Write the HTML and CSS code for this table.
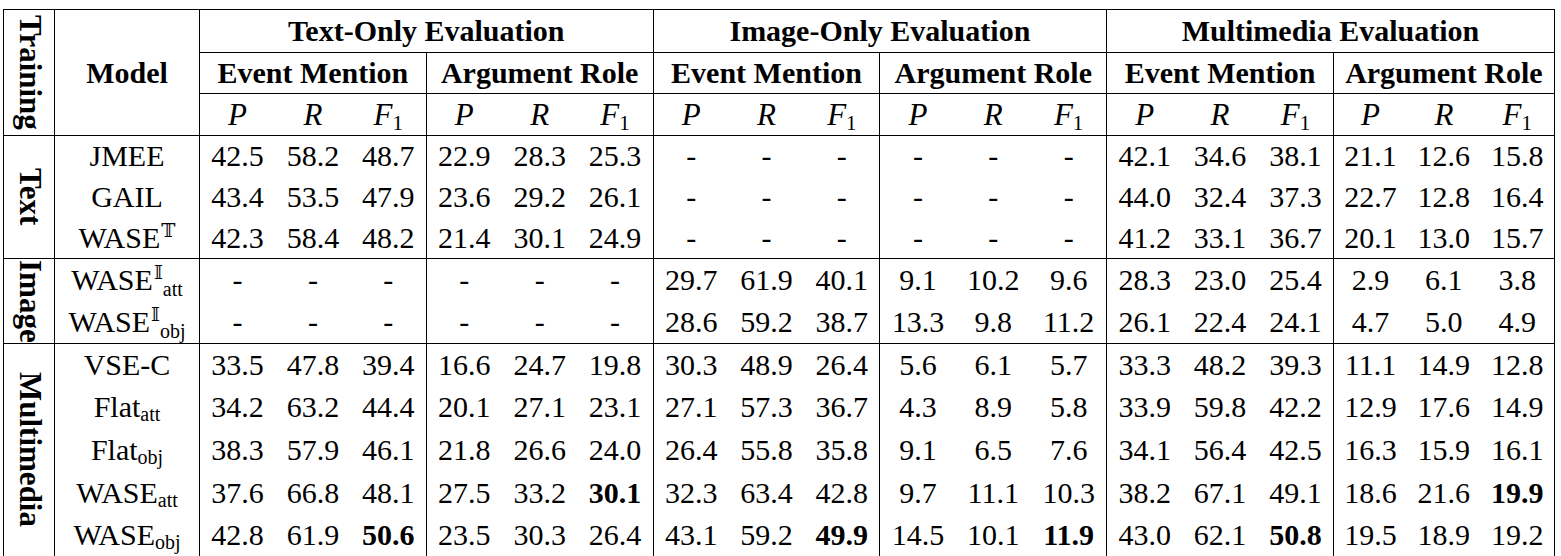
FILE: index.html
```html
<!DOCTYPE html>
<html lang="en">
<head>
    <meta charset="UTF-8">
    <meta name="viewport" content="width=device-width, initial-scale=1.0">
    <title>Event Extraction Results</title>
    <link rel="stylesheet" href="styles.css">
</head>
<body>
    <table class="results">
        <colgroup><col class="c-train"></colgroup>
        <colgroup><col class="c-model"></colgroup>
        <colgroup><col class="c-num"><col class="c-num"><col class="c-num"></colgroup>
        <colgroup><col class="c-num"><col class="c-num"><col class="c-num"></colgroup>
        <colgroup><col class="c-num"><col class="c-num"><col class="c-num"></colgroup>
        <colgroup><col class="c-num"><col class="c-num"><col class="c-num"></colgroup>
        <colgroup><col class="c-num"><col class="c-num"><col class="c-num"></colgroup>
        <colgroup><col class="c-last"><col class="c-last"><col class="c-last"></colgroup>

        <thead>
            <tr class="h1">
                <th rowspan="3" class="side"><span class="vert">Training</span></th>
                <th rowspan="3">Model</th>
                <th colspan="6" class="grp">Text-Only Evaluation</th>
                <th colspan="6" class="grp">Image-Only Evaluation</th>
                <th colspan="6" class="grp">Multimedia Evaluation</th>
            </tr>
            <tr class="h2">
                <th colspan="3" class="sub">Event Mention</th>
                <th colspan="3" class="sub">Argument Role</th>
                <th colspan="3" class="sub">Event Mention</th>
                <th colspan="3" class="sub">Argument Role</th>
                <th colspan="3" class="sub">Event Mention</th>
                <th colspan="3" class="sub">Argument Role</th>
            </tr>
            <tr class="h3">
                <th class="m">P</th><th class="m">R</th><th class="m">F<sub class="one">1</sub></th>
                <th class="m">P</th><th class="m">R</th><th class="m">F<sub class="one">1</sub></th>
                <th class="m">P</th><th class="m">R</th><th class="m">F<sub class="one">1</sub></th>
                <th class="m">P</th><th class="m">R</th><th class="m">F<sub class="one">1</sub></th>
                <th class="m">P</th><th class="m">R</th><th class="m">F<sub class="one">1</sub></th>
                <th class="m">P</th><th class="m">R</th><th class="m">F<sub class="one">1</sub></th>
            </tr>
        </thead>

        <!-- trained on text only -->
        <tbody class="text">
            <tr>
                <th rowspan="3" class="side"><span class="vert">Text</span></th>
                <td>JMEE</td>
                <td>42.5</td><td>58.2</td><td>48.7</td><td>22.9</td><td>28.3</td><td>25.3</td>
                <td>-</td><td>-</td><td>-</td><td>-</td><td>-</td><td>-</td>
                <td>42.1</td><td>34.6</td><td>38.1</td><td>21.1</td><td>12.6</td><td>15.8</td>
            </tr>
            <tr>
                <td>GAIL</td>
                <td>43.4</td><td>53.5</td><td>47.9</td><td>23.6</td><td>29.2</td><td>26.1</td>
                <td>-</td><td>-</td><td>-</td><td>-</td><td>-</td><td>-</td>
                <td>44.0</td><td>32.4</td><td>37.3</td><td>22.7</td><td>12.8</td><td>16.4</td>
            </tr>
            <tr>
                <td>WASE<sup class="ds">𝕋</sup></td>
                <td>42.3</td><td>58.4</td><td>48.2</td><td>21.4</td><td>30.1</td><td>24.9</td>
                <td>-</td><td>-</td><td>-</td><td>-</td><td>-</td><td>-</td>
                <td>41.2</td><td>33.1</td><td>36.7</td><td>20.1</td><td>13.0</td><td>15.7</td>
            </tr>
        </tbody>

        <!-- trained on images only -->
        <tbody class="image">
            <tr>
                <th rowspan="2" class="side"><span class="vert">Image</span></th>
                <td>WASE<sup class="ds">𝕀</sup><sub>att</sub></td>
                <td>-</td><td>-</td><td>-</td><td>-</td><td>-</td><td>-</td>
                <td>29.7</td><td>61.9</td><td>40.1</td><td>9.1</td><td>10.2</td><td>9.6</td>
                <td>28.3</td><td>23.0</td><td>25.4</td><td>2.9</td><td>6.1</td><td>3.8</td>
            </tr>
            <tr>
                <td>WASE<sup class="ds">𝕀</sup><sub>obj</sub></td>
                <td>-</td><td>-</td><td>-</td><td>-</td><td>-</td><td>-</td>
                <td>28.6</td><td>59.2</td><td>38.7</td><td>13.3</td><td>9.8</td><td>11.2</td>
                <td>26.1</td><td>22.4</td><td>24.1</td><td>4.7</td><td>5.0</td><td>4.9</td>
            </tr>
        </tbody>

        <!-- trained on both -->
        <tbody class="multi">
            <tr>
                <th rowspan="5" class="side"><span class="vert">Multimedia</span></th>
                <td>VSE-C</td>
                <td>33.5</td><td>47.8</td><td>39.4</td><td>16.6</td><td>24.7</td><td>19.8</td>
                <td>30.3</td><td>48.9</td><td>26.4</td><td>5.6</td><td>6.1</td><td>5.7</td>
                <td>33.3</td><td>48.2</td><td>39.3</td><td>11.1</td><td>14.9</td><td>12.8</td>
            </tr>
            <tr>
                <td>Flat<sub class="tight">att</sub></td>
                <td>34.2</td><td>63.2</td><td>44.4</td><td>20.1</td><td>27.1</td><td>23.1</td>
                <td>27.1</td><td>57.3</td><td>36.7</td><td>4.3</td><td>8.9</td><td>5.8</td>
                <td>33.9</td><td>59.8</td><td>42.2</td><td>12.9</td><td>17.6</td><td>14.9</td>
            </tr>
            <tr>
                <td>Flat<sub class="tight">obj</sub></td>
                <td>38.3</td><td>57.9</td><td>46.1</td><td>21.8</td><td>26.6</td><td>24.0</td>
                <td>26.4</td><td>55.8</td><td>35.8</td><td>9.1</td><td>6.5</td><td>7.6</td>
                <td>34.1</td><td>56.4</td><td>42.5</td><td>16.3</td><td>15.9</td><td>16.1</td>
            </tr>
            <tr>
                <td>WASE<sub class="tight">att</sub></td>
                <td>37.6</td><td>66.8</td><td>48.1</td><td>27.5</td><td>33.2</td><td class="best">30.1</td>
                <td>32.3</td><td>63.4</td><td>42.8</td><td>9.7</td><td>11.1</td><td>10.3</td>
                <td>38.2</td><td>67.1</td><td>49.1</td><td>18.6</td><td>21.6</td><td class="best">19.9</td>
            </tr>
            <tr>
                <td>WASE<sub class="tight">obj</sub></td>
                <td>42.8</td><td>61.9</td><td class="best">50.6</td><td>23.5</td><td>30.3</td><td>26.4</td>
                <td>43.1</td><td>59.2</td><td class="best">49.9</td><td>14.5</td><td>10.1</td><td class="best">11.9</td>
                <td>43.0</td><td>62.1</td><td class="best">50.8</td><td>19.5</td><td>18.9</td><td>19.2</td>
            </tr>
        </tbody>
    </table>
</body>
</html>
```

FILE: styles.css
```css
* {
    box-sizing: border-box;
}

body {
    margin: 0;
    padding: 9px 0 0 3px;
    background-color: #fff;
    color: #000;
    font-family: "Liberation Serif", "Times New Roman", serif;
}

.results {
    border-collapse: collapse;
    table-layout: fixed;
    width: 1551px;
    border: 1px solid #000;
    font-size: 30px;
}

colgroup {
    border-left: 1px solid #000;
}

.c-train { width: 51px; }
.c-model { width: 145px; }
.c-num { width: 75.6px; }
.c-last { width: 73.6px; }

th, td {
    padding: 0;
    text-align: center;
    vertical-align: middle;
    white-space: nowrap;
    line-height: 34px;
}

th {
    font-weight: bold;
}

tbody {
    border-top: 1px solid #000;
}

.h1 { height: 43px; }
.h2 { height: 41px; }
.h3 { height: 42px; }
.text tr { height: 41px; }
.image tr { height: 42.5px; }
.multi tr { height: 42.6px; }

.grp, .sub {
    border-bottom: 1px solid #000;
}

.side {
    padding-left: 2px;
    line-height: 0;
}

.vert {
    writing-mode: vertical-rl;
    display: inline-block;
    vertical-align: middle;
    line-height: 30px;
    font-size: 31px;
}

.m {
    font-weight: normal;
    font-style: italic;
    font-family: "Liberation Serif", serif;
    font-size: 31px;
}

/* sub/superscripts are nudged with relative offsets so rows keep their height */
sup, sub {
    font-size: 20px;
    line-height: 0;
    vertical-align: baseline;
    position: relative;
}

.m .one {
    font-style: normal;
    font-size: 21px;
    top: 5px;
}

sup.ds {
    font-family: "DejaVu Serif", "DejaVu Sans", serif;
    font-size: 19px;
    font-weight: normal;
    top: -11px;
    margin-left: 1px;
}

sub {
    top: 6px;
}

sub.tight {
    top: 4px;
}

.best {
    font-weight: bold;
}
```
